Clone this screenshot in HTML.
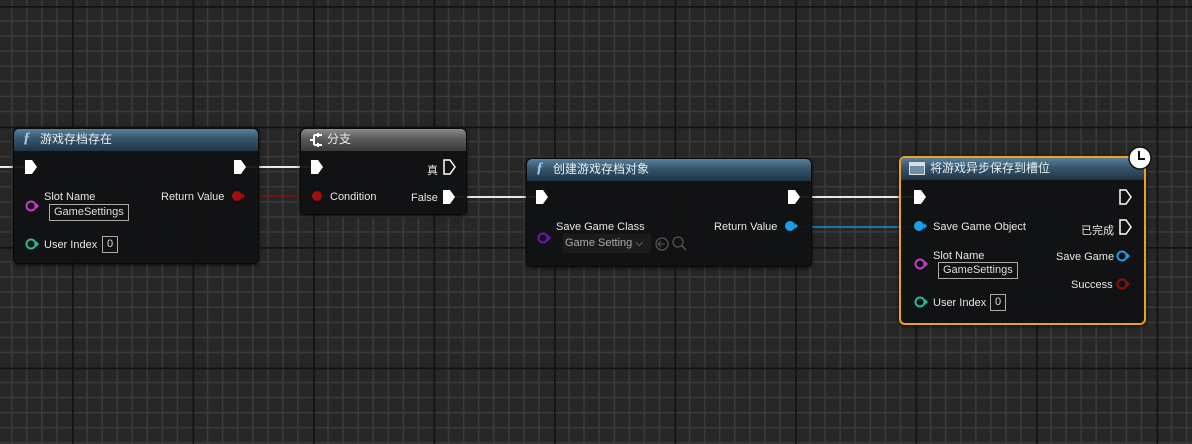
<!DOCTYPE html>
<html><head><meta charset="utf-8"><style>
*{margin:0;padding:0;box-sizing:border-box}
body{width:1192px;height:444px;overflow:hidden;background:#262626;font-family:"Liberation Sans","Noto Sans CJK SC",sans-serif;color:#e8e8e8;font-size:11px;position:relative}
svg.bg{position:absolute;left:0;top:0}
.node{position:absolute;background:rgba(16,17,18,0.94);border-radius:5px;box-shadow:0 1px 4px rgba(0,0,0,.7);border:1px solid #0a0a0a}
.hdr{height:22px;border-radius:5px 5px 0 0;padding-left:26px;line-height:21px;font-size:12px;color:#e6eef4;position:relative}
.blue{background:linear-gradient(180deg,#5a7f9a 0%,#35546b 45%,#213544 100%)}
.grey{background:linear-gradient(180deg,#8a8a8a 0%,#5a5a5a 45%,#3a3a3a 100%)}
.t{position:absolute;white-space:nowrap;font-size:11px;color:#e6e6e6;margin-top:2px}
.box{position:absolute;border:1px solid #aaa;font-size:11px;color:#ddd;padding:0 4px;line-height:15px;height:17px;white-space:nowrap}
.abs{position:absolute}
.f{position:absolute;left:9px;top:-1px;font-style:italic;font-weight:bold;font-family:'Liberation Serif',serif;font-size:15px;color:#9ccaf0}
</style></head><body>
<svg class="bg" width="1192" height="444">
<defs>
<pattern id="g" x="-48.5" y="6" width="120.5" height="120.5" patternUnits="userSpaceOnUse">
<g stroke="#3a3a3a" stroke-width="1.6">
<line x1="15.06" y1="0" x2="15.06" y2="120.5"/><line x1="30.12" y1="0" x2="30.12" y2="120.5"/><line x1="45.19" y1="0" x2="45.19" y2="120.5"/><line x1="60.25" y1="0" x2="60.25" y2="120.5"/><line x1="75.31" y1="0" x2="75.31" y2="120.5"/><line x1="90.37" y1="0" x2="90.37" y2="120.5"/><line x1="105.44" y1="0" x2="105.44" y2="120.5"/>
<line y1="15.06" x1="0" y2="15.06" x2="120.5"/><line y1="30.12" x1="0" y2="30.12" x2="120.5"/><line y1="45.19" x1="0" y2="45.19" x2="120.5"/><line y1="60.25" x1="0" y2="60.25" x2="120.5"/><line y1="75.31" x1="0" y2="75.31" x2="120.5"/><line y1="90.37" x1="0" y2="90.37" x2="120.5"/><line y1="105.44" x1="0" y2="105.44" x2="120.5"/>
</g>
<g stroke="#131313" stroke-width="2"><line x1="0.7" y1="0" x2="0.7" y2="120.5"/><line y1="0.7" x1="0" y2="0.7" x2="120.5"/></g>
</pattern>
</defs>
<rect width="1192" height="444" fill="#272727"/>
<rect width="1192" height="444" fill="url(#g)"/>
<g fill="none">
<line x1="0" y1="167" x2="30" y2="167" stroke="#e8e8e8" stroke-width="2"/>
<line x1="244" y1="167" x2="316" y2="167" stroke="#e8e8e8" stroke-width="2"/>
<line x1="454" y1="197" x2="540" y2="197" stroke="#e8e8e8" stroke-width="2"/>
<line x1="800" y1="197" x2="915" y2="197" stroke="#e8e8e8" stroke-width="2"/>
<line x1="240" y1="196" x2="316" y2="196" stroke="#8a1010" stroke-width="1.5"/>
<line x1="795" y1="227" x2="915" y2="227" stroke="#1a8ad0" stroke-width="1.5"/>
</g>
</svg>

<div class="node" style="left:13px;top:128px;width:246px;height:136px">
<div class="hdr blue"><span class="f">ƒ</span>游戏存档存在</div>
</div>
<div class="node" style="left:300px;top:128px;width:167px;height:87px">
<div class="hdr grey">分支<svg class="abs" style="left:8px;top:4px" width="14" height="14" viewBox="0 0 14 14"><path d="M1 7h4M5 2v10M5 2h4M5 12h4M9 0v4M9 10v4M9 2h4M9 12h4" stroke="#fff" stroke-width="2" fill="none"/></svg></div>
</div>
<div class="node" style="left:526px;top:158px;width:286px;height:109px">
<div class="hdr blue"><span class="f">ƒ</span>创建游戏存档对象</div>
</div>
<div class="node" style="left:899px;top:156px;width:247px;height:169px;border:2px solid #f0a020;border-radius:6px">
<div class="hdr blue" style="border-radius:3px 3px 0 0;padding-left:29px;height:22px">将游戏异步保存到槽位<span class="abs" style="left:8px;top:4px;width:16px;height:13px;border:1.5px solid #ddd;background:linear-gradient(#ddd 0 3px,#6f8ea6 3px)"></span></div>
</div>
<svg class="abs" style="left:1128px;top:146px" width="24" height="24"><circle cx="12" cy="12" r="11" fill="#fff" stroke="#111" stroke-width="1.5"/><path d="M11 5v8h6" stroke="#111" stroke-width="2" fill="none"/></svg>

<svg class="abs" style="left:0;top:0" width="1192" height="444">
<g fill="#fff">
<path d="M25 160h7l5 7-5 7h-7z"/>
<path d="M234 160h7l5 7-5 7h-7z"/>
<path d="M311 160h7l5 7-5 7h-7z"/>
<path d="M443 190h7l5 7-5 7h-7z"/>
<path d="M536 190h7l5 7-5 7h-7z"/>
<path d="M788 190h7l5 7-5 7h-7z"/>
<path d="M914 190h7l5 7-5 7h-7z"/>
</g>
<g fill="none" stroke="#fff" stroke-width="1.5">
<path d="M444 160h6l5 7-5 7h-6z"/>
<path d="M1120 190h6l5 7-5 7h-6z"/>
<path d="M1120 220h6l5 7-5 7h-6z"/>
</g>
<circle cx="237" cy="196" r="5" fill="#a00e0e"/><path d="M242 193l3 3-3 3z" fill="#a00e0e"/>
<circle cx="317" cy="196" r="5" fill="#a00e0e"/>
<circle cx="31" cy="206" r="4.5" fill="none" stroke="#c83ac8" stroke-width="2"/><path d="M36 203l3 3-3 3z" fill="#c83ac8"/>
<circle cx="31" cy="244" r="4.5" fill="none" stroke="#2ab894" stroke-width="2"/><path d="M36 241l3 3-3 3z" fill="#2ab894"/>
<circle cx="543" cy="238" r="4.5" fill="none" stroke="#6a1ab0" stroke-width="2"/><path d="M548 235l3 3-3 3z" fill="#6a1ab0"/>
<circle cx="790" cy="226" r="5" fill="#1aa0e8"/><path d="M795 223l3 3-3 3z" fill="#1aa0e8"/>
<circle cx="919" cy="226" r="5" fill="#1aa0e8"/><path d="M924 223l3 3-3 3z" fill="#1aa0e8"/>
<circle cx="920" cy="264" r="4.5" fill="none" stroke="#c83ac8" stroke-width="2"/><path d="M925 261l3 3-3 3z" fill="#c83ac8"/>
<circle cx="920" cy="302" r="4.5" fill="none" stroke="#2ab894" stroke-width="2"/><path d="M925 299l3 3-3 3z" fill="#2ab894"/>
<circle cx="1122" cy="256" r="4.5" fill="none" stroke="#1aa0e8" stroke-width="2"/><path d="M1127 253l3 3-3 3z" fill="#1aa0e8"/>
<circle cx="1122" cy="284" r="4.5" fill="none" stroke="#8a1010" stroke-width="2"/><path d="M1127 281l3 3-3 3z" fill="#8a1010"/>
<circle cx="662" cy="244" r="6" fill="none" stroke="#555" stroke-width="1.3"/><path d="M665 244h-6M661 241l-3 3 3 3" stroke="#555" fill="none"/>
<circle cx="678" cy="242" r="5" fill="none" stroke="#555" stroke-width="1.3"/><path d="M682 246l4 4" stroke="#555" stroke-width="1.5"/>
</svg>

<span class="t" style="left:44px;top:189px">Slot Name</span>
<div class="box" style="left:49px;top:204px">GameSettings</div>
<span class="t" style="left:44px;top:237px">User Index</span>
<div class="box" style="left:102px;top:236px">0</div>
<span class="t" style="left:161px;top:189px">Return Value</span>

<span class="t" style="left:330px;top:189px">Condition</span>
<span class="t" style="left:427px;top:160px">真</span>
<span class="t" style="left:411px;top:190px">False</span>

<span class="t" style="left:556px;top:219px">Save Game Class</span>
<span class="t" style="left:714px;top:219px">Return Value</span>
<div class="abs" style="left:563px;top:234px;width:88px;height:19px;background:#1c1c1c;border-radius:2px;color:#aaa;font-size:11px;line-height:19px;padding-left:2px">Game Setting <span style="font-size:10px">⌵</span></div>

<span class="t" style="left:933px;top:219px">Save Game Object</span>
<span class="t" style="left:933px;top:248px">Slot Name</span>
<div class="box" style="left:938px;top:262px">GameSettings</div>
<span class="t" style="left:933px;top:295px">User Index</span>
<div class="box" style="left:990px;top:294px">0</div>
<span class="t" style="left:1081px;top:220px">已完成</span>
<span class="t" style="left:1056px;top:249px">Save Game</span>
<span class="t" style="left:1071px;top:277px">Success</span>
</body></html>
